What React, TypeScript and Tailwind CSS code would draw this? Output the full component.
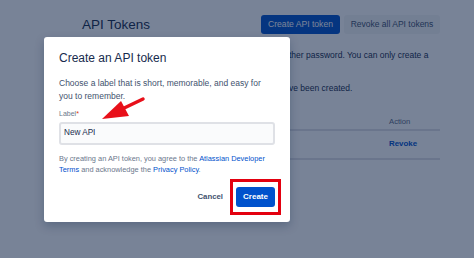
import React from "react";

const App = () => {
  return (
    <div className="relative w-[474px] h-[258px] overflow-hidden bg-white font-['Liberation_Sans',Arial,sans-serif] text-[#172b4d]">
      {/* Page behind the dialog */}
      <div className="ml-[82px] w-[358px] pt-[15px]">
        <div className="flex items-center justify-between">
          <h1 className="text-[13.5px] leading-[19px] text-[#172b4d]">API Tokens</h1>
          <div className="flex gap-[4px]">
            <button className="h-[19px] w-[79px] rounded-[3px] bg-[#0052cc] text-[8.6px] text-white">
              Create API token
            </button>
            <button className="h-[19px] w-[96px] rounded-[3px] bg-[#f4f5f7] text-[8.5px] text-[#42526e]">
              Revoke all API tokens
            </button>
          </div>
        </div>
        <div className="mt-[13px] text-[8.5px] leading-[16.5px] text-[#172b4d]">
          <p className="flex whitespace-nowrap">
            <span className="w-[207px] shrink-0" />
            <span>ther password. You can only create a</span>
          </p>
          <p className="h-[16.5px]" />
          <p className="flex whitespace-nowrap">
            <span className="w-[207px] shrink-0" />
            <span>ve been created.</span>
          </p>
        </div>
        <div className="mt-[19px] text-[7.7px]">
          <div className="flex h-[15px] items-center border-b-2 border-[#dfe1e6]">
            <span className="w-[307px]" />
            <span className="text-[#5e6c84]">Action</span>
          </div>
          <div className="flex h-[29px] items-center border-b-2 border-[#dfe1e6]">
            <span className="w-[307px]" />
            <span className="text-[7.9px] font-bold text-[#0052cc]">Revoke</span>
          </div>
        </div>
      </div>

      {/* Blanket */}
      <div className="absolute inset-0 bg-[#091e42]/55" />

      {/* Dialog */}
      <div className="absolute left-[44px] top-[37px] w-[246px] h-[185px] rounded-[3px] bg-white px-[15px] pt-[13px] shadow-[0_4px_10px_rgba(9,30,66,0.25)]">
        <h2 className="text-[12px] leading-[17px] text-[#172b4d]">Create an API token</h2>
        <p className="mt-[10px] text-[8.5px] leading-[13px] text-[#42526e]">
          Choose a label that is short, memorable, and easy for you to remember.
        </p>
        <div className="mt-[6px] text-[7px] leading-[10px] text-[#6b778c]">
          Label<span className="text-[#de350b]">*</span>
        </div>
        <div className="mt-[3px] flex h-[23px] items-center rounded-[3px] border-2 border-[#dfe1e6] bg-[#fafbfc] px-[3px] text-[8.2px] text-[#172b4d]">
          New API
        </div>
        <div className="mt-[9px] text-[7.4px] leading-[10.5px] text-[#6b778c]">
          <p>
            By creating an API token, you agree to the{" "}
            <span className="text-[#0052cc]">Atlassian Developer</span>
          </p>
          <p>
            <span className="text-[#0052cc]">Terms</span> and acknowledge the{" "}
            <span className="text-[#0052cc]">Privacy Policy</span>.
          </p>
        </div>
        <div className="mt-[12px] flex items-center justify-end gap-[13px]">
          <button className="text-[7.8px] font-semibold text-[#42526e]">Cancel</button>
          <button className="h-[20px] w-[39px] rounded-[3px] bg-[#0052cc] text-[8px] font-bold text-white">
            Create
          </button>
        </div>
      </div>

      {/* Annotation: red box */}
      <div className="absolute left-[230px] top-[179px] h-[36px] w-[51px] border-[3px] border-[#e3000f]" />

      {/* Annotation: red arrow */}
      <svg className="absolute left-0 top-0" width="474" height="258" viewBox="0 0 474 258">
        <line x1="143" y1="99" x2="120" y2="110" stroke="#e8101a" strokeWidth="3.5" strokeLinecap="round" />
        <polygon points="102,119 121,101 129,116" fill="#e8101a" />
      </svg>
    </div>
  );
};

export default App;
